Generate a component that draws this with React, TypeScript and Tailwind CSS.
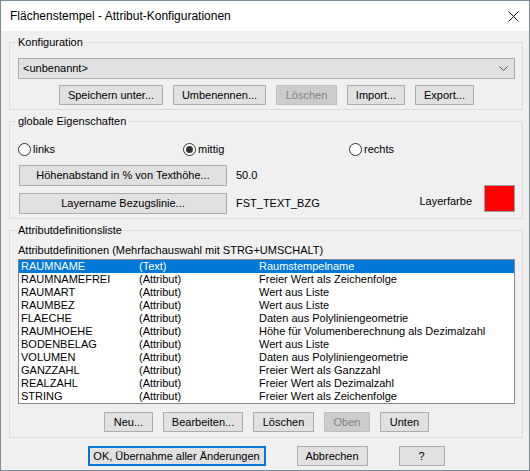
import React from 'react';

interface AttrRow {
  name: string;
  kind: string;
  desc: string;
}

const rows: AttrRow[] = [
  { name: 'RAUMNAME', kind: '(Text)', desc: 'Raumstempelname' },
  { name: 'RAUMNAMEFREI', kind: '(Attribut)', desc: 'Freier Wert als Zeichenfolge' },
  { name: 'RAUMART', kind: '(Attribut)', desc: 'Wert aus Liste' },
  { name: 'RAUMBEZ', kind: '(Attribut)', desc: 'Wert aus Liste' },
  { name: 'FLAECHE', kind: '(Attribut)', desc: 'Daten aus Polyliniengeometrie' },
  { name: 'RAUMHOEHE', kind: '(Attribut)', desc: 'Höhe für Volumenberechnung als Dezimalzahl' },
  { name: 'BODENBELAG', kind: '(Attribut)', desc: 'Wert aus Liste' },
  { name: 'VOLUMEN', kind: '(Attribut)', desc: 'Daten aus Polyliniengeometrie' },
  { name: 'GANZZAHL', kind: '(Attribut)', desc: 'Freier Wert als Ganzzahl' },
  { name: 'REALZAHL', kind: '(Attribut)', desc: 'Freier Wert als Dezimalzahl' },
  { name: 'STRING', kind: '(Attribut)', desc: 'Freier Wert als Zeichenfolge' },
];

// Windows-style push button
function Btn({ label, w, disabled, h = 'h-[20px]' }: { label: string; w: string; disabled?: boolean; h?: string }) {
  return (
    <button
      className={`${w} ${h} flex items-center justify-center border text-[11px] leading-none ${
        disabled ? 'border-[#bfbfbf] bg-[#cccccc] text-[#838383]' : 'border-[#adadad] bg-[#e1e1e1] text-black'
      }`}
      disabled={disabled}
    >
      {label}
    </button>
  );
}

function Radio({ label, checked }: { label: string; checked?: boolean }) {
  return (
    <div className="flex items-center gap-[2px]">
      <span className="flex h-[13px] w-[13px] items-center justify-center rounded-full border border-[#333333] bg-white">
        {checked && <span className="h-[7px] w-[7px] rounded-full bg-[#333333]" />}
      </span>
      <span className="text-[11px] leading-[13px]">{label}</span>
    </div>
  );
}

export default function App() {
  return (
    <div className="flex h-[471px] w-[530px] flex-col border border-[#7b8895] bg-[#f0f0f0] font-['Liberation_Sans',Arial,sans-serif] text-[11px] text-black">
      {/* Title bar */}
      <div className="flex h-[30px] shrink-0 items-center justify-between bg-white pl-[9px] pr-[10px]">
        <span className="text-[12px] leading-none">Flächenstempel - Attribut-Konfigurationen</span>
        <svg width="11" height="11" viewBox="0 0 11 11" className="mt-px">
          <path d="M0.5 0.5 L10.5 10.5 M10.5 0.5 L0.5 10.5" stroke="#111" strokeWidth="1" />
        </svg>
      </div>

      <div className="flex flex-col pl-[8px]">
        {/* Konfiguration */}
        <fieldset className="mt-[5px] w-[514px] border border-[#dcdcdc]">
          <legend className="ml-[6px] px-[2px] leading-[13px]">Konfiguration</legend>
          <div className="flex flex-col pb-[4px] pl-[8px] pr-[7px]">
            <div className="mt-[9px] flex h-[21px] items-center justify-between border border-[#adadad] bg-[#e1e1e1] pl-[4px] pr-[6px]">
              <span className="leading-none">&lt;unbenannt&gt;</span>
              <svg width="9" height="5" viewBox="0 0 9 5">
                <path d="M0.5 0.5 L4.5 4.5 L8.5 0.5" fill="none" stroke="#555" strokeWidth="1" />
              </svg>
            </div>
            <div className="mt-[6px] flex justify-center gap-[10px]">
              <Btn label="Speichern unter..." w="w-[104px]" />
              <Btn label="Umbenennen..." w="w-[93px]" />
              <Btn label="Löschen" w="w-[61px]" disabled />
              <Btn label="Import..." w="w-[58px]" />
              <Btn label="Export..." w="w-[59px]" />
            </div>
          </div>
        </fieldset>

        {/* globale Eigenschaften */}
        <fieldset className="mt-[5px] w-[514px] border border-[#dcdcdc]">
          <legend className="ml-[6px] px-[2px] leading-[13px]">globale Eigenschaften</legend>
          <div className="flex flex-col pb-[4px] pl-[8px] pr-[7px]">
            <div className="mt-[15px] flex h-[13px] items-center">
              <div className="w-[165px]">
                <Radio label="links" />
              </div>
              <div className="w-[166px]">
                <Radio label="mittig" checked />
              </div>
              <Radio label="rechts" />
            </div>
            <div className="mt-[9px] flex items-center">
              <div className="ml-px">
                <Btn label="Höhenabstand in % von Texthöhe..." w="w-[208px]" h="h-[21px]" />
              </div>
              <span className="ml-[9px]">50.0</span>
            </div>
            <div className="mt-[7px] flex h-[21px] items-center">
              <div className="ml-px">
                <Btn label="Layername Bezugslinie..." w="w-[208px]" h="h-[21px]" />
              </div>
              <span className="ml-[9px]">FST_TEXT_BZG</span>
              <span className="mb-[4px] ml-auto">Layerfarbe</span>
              <div className="-mt-[8px] ml-[12px] h-[27px] w-[31px] self-start border border-[#a0a0a0] bg-[#ff0000]" />
            </div>
          </div>
        </fieldset>

        {/* Attributdefinitionsliste */}
        <fieldset className="mt-[5px] w-[514px] border border-[#dcdcdc]">
          <legend className="ml-[6px] px-[2px] leading-[13px]">Attributdefinitionsliste</legend>
          <div className="flex flex-col pb-[5px] pl-[8px] pr-[7px]">
            <div className="mt-[7px] leading-[13px]">Attributdefinitionen (Mehrfachauswahl mit STRG+UMSCHALT)</div>
            <div className="mt-[2px] border border-[#828790] bg-white">
              {rows.map((r, i) => (
                <div
                  key={r.name}
                  className={`grid h-[13px] grid-cols-[118px_120px_1fr] pl-[2px] leading-[13px] ${
                    i === 0 ? 'bg-[#0078d7] text-white' : ''
                  }`}
                >
                  <span>{r.name}</span>
                  <span>{r.kind}</span>
                  <span>{r.desc}</span>
                </div>
              ))}
            </div>
            <div className="mt-[8px] flex justify-center gap-[10px]">
              <Btn label="Neu..." w="w-[49px]" />
              <Btn label="Bearbeiten..." w="w-[80px]" />
              <Btn label="Löschen" w="w-[61px]" />
              <Btn label="Oben" w="w-[46px]" disabled />
              <Btn label="Unten" w="w-[49px]" />
            </div>
          </div>
        </fieldset>

        {/* Dialog buttons */}
        <div className="mt-[8px] flex w-[514px] justify-center gap-[31px]">
          <button className="flex h-[20px] w-[178px] items-center justify-center border-2 border-[#0078d7] bg-[#e1e1e1] text-[11px] leading-none">
            OK, Übernahme aller Änderungen
          </button>
          <Btn label="Abbrechen" w="w-[71px]" />
          <Btn label="?" w="w-[46px]" />
        </div>
      </div>
    </div>
  );
}
